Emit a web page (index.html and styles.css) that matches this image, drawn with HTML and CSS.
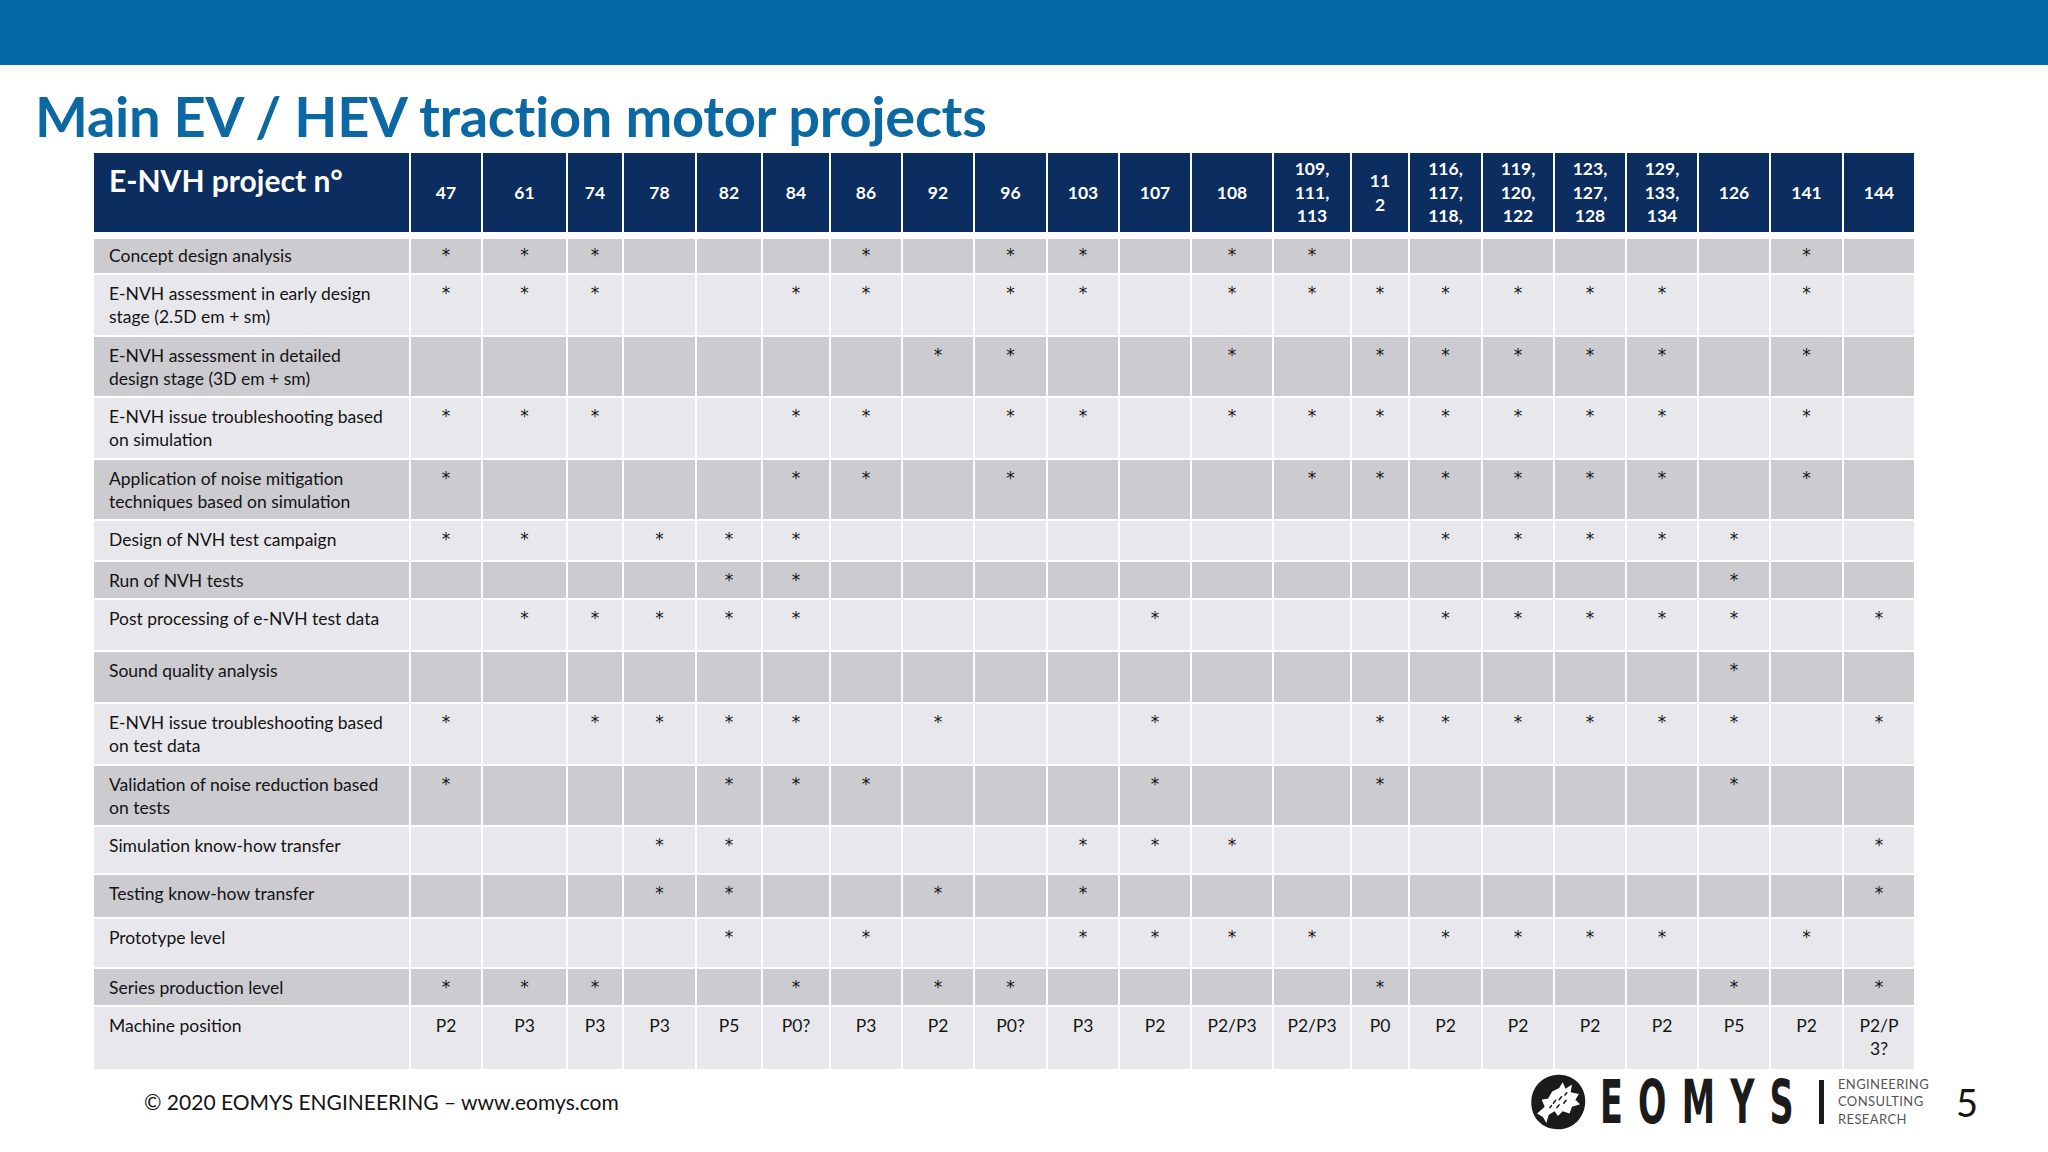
FILE: index.html
```html
<!DOCTYPE html>
<html lang="en">
<head>
<meta charset="utf-8">
<title>Main EV / HEV traction motor projects</title>
<link rel="stylesheet" href="styles.css">
</head>
<body>
<div class="topbar"></div>
<h1 class="title">Main EV / HEV traction motor projects</h1>
<div class="matrix">
  <div class="row head">
    <div class="lbl">E-NVH project n°</div>
    <div>47</div><div>61</div><div>74</div><div>78</div><div>82</div><div>84</div><div>86</div><div>92</div><div>96</div><div>103</div><div>107</div><div>108</div>
    <div>109,<br>111,<br>113</div><div>11<br>2</div><div>116,<br>117,<br>118,</div><div>119,<br>120,<br>122</div><div>123,<br>127,<br>128</div><div>129,<br>133,<br>134</div>
    <div>126</div><div>141</div><div>144</div>
  </div>
  <div class="body">
    <div class="row dark first"><div class="lbl">Concept design analysis</div><div>*</div><div>*</div><div>*</div><div></div><div></div><div></div><div>*</div><div></div><div>*</div><div>*</div><div></div><div>*</div><div>*</div><div></div><div></div><div></div><div></div><div></div><div></div><div>*</div><div></div></div>
    <div class="row light"><div class="lbl">E-NVH assessment in early design<br>stage (2.5D em + sm)</div><div>*</div><div>*</div><div>*</div><div></div><div></div><div>*</div><div>*</div><div></div><div>*</div><div>*</div><div></div><div>*</div><div>*</div><div>*</div><div>*</div><div>*</div><div>*</div><div>*</div><div></div><div>*</div><div></div></div>
    <div class="row dark"><div class="lbl">E-NVH assessment in detailed<br>design stage (3D em + sm)</div><div></div><div></div><div></div><div></div><div></div><div></div><div></div><div>*</div><div>*</div><div></div><div></div><div>*</div><div></div><div>*</div><div>*</div><div>*</div><div>*</div><div>*</div><div></div><div>*</div><div></div></div>
    <div class="row light"><div class="lbl">E-NVH issue troubleshooting based<br>on simulation</div><div>*</div><div>*</div><div>*</div><div></div><div></div><div>*</div><div>*</div><div></div><div>*</div><div>*</div><div></div><div>*</div><div>*</div><div>*</div><div>*</div><div>*</div><div>*</div><div>*</div><div></div><div>*</div><div></div></div>
    <div class="row dark"><div class="lbl">Application of noise mitigation<br>techniques based on simulation</div><div>*</div><div></div><div></div><div></div><div></div><div>*</div><div>*</div><div></div><div>*</div><div></div><div></div><div></div><div>*</div><div>*</div><div>*</div><div>*</div><div>*</div><div>*</div><div></div><div>*</div><div></div></div>
    <div class="row light"><div class="lbl">Design of NVH test campaign</div><div>*</div><div>*</div><div></div><div>*</div><div>*</div><div>*</div><div></div><div></div><div></div><div></div><div></div><div></div><div></div><div></div><div>*</div><div>*</div><div>*</div><div>*</div><div>*</div><div></div><div></div></div>
    <div class="row dark"><div class="lbl">Run of NVH tests</div><div></div><div></div><div></div><div></div><div>*</div><div>*</div><div></div><div></div><div></div><div></div><div></div><div></div><div></div><div></div><div></div><div></div><div></div><div></div><div>*</div><div></div><div></div></div>
    <div class="row light"><div class="lbl">Post processing of e-NVH test data</div><div></div><div>*</div><div>*</div><div>*</div><div>*</div><div>*</div><div></div><div></div><div></div><div></div><div>*</div><div></div><div></div><div></div><div>*</div><div>*</div><div>*</div><div>*</div><div>*</div><div></div><div>*</div></div>
    <div class="row dark"><div class="lbl">Sound quality analysis</div><div></div><div></div><div></div><div></div><div></div><div></div><div></div><div></div><div></div><div></div><div></div><div></div><div></div><div></div><div></div><div></div><div></div><div></div><div>*</div><div></div><div></div></div>
    <div class="row light"><div class="lbl">E-NVH issue troubleshooting based<br>on test data</div><div>*</div><div></div><div>*</div><div>*</div><div>*</div><div>*</div><div></div><div>*</div><div></div><div></div><div>*</div><div></div><div></div><div>*</div><div>*</div><div>*</div><div>*</div><div>*</div><div>*</div><div></div><div>*</div></div>
    <div class="row dark"><div class="lbl">Validation of noise reduction based<br>on tests</div><div>*</div><div></div><div></div><div></div><div>*</div><div>*</div><div>*</div><div></div><div></div><div></div><div>*</div><div></div><div></div><div>*</div><div></div><div></div><div></div><div></div><div>*</div><div></div><div></div></div>
    <div class="row light"><div class="lbl">Simulation know-how transfer</div><div></div><div></div><div></div><div>*</div><div>*</div><div></div><div></div><div></div><div></div><div>*</div><div>*</div><div>*</div><div></div><div></div><div></div><div></div><div></div><div></div><div></div><div></div><div>*</div></div>
    <div class="row dark"><div class="lbl">Testing know-how transfer</div><div></div><div></div><div></div><div>*</div><div>*</div><div></div><div></div><div>*</div><div></div><div>*</div><div></div><div></div><div></div><div></div><div></div><div></div><div></div><div></div><div></div><div></div><div>*</div></div>
    <div class="row light"><div class="lbl">Prototype level</div><div></div><div></div><div></div><div></div><div>*</div><div></div><div>*</div><div></div><div></div><div>*</div><div>*</div><div>*</div><div>*</div><div></div><div>*</div><div>*</div><div>*</div><div>*</div><div></div><div>*</div><div></div></div>
    <div class="row dark"><div class="lbl">Series production level</div><div>*</div><div>*</div><div>*</div><div></div><div></div><div>*</div><div></div><div>*</div><div>*</div><div></div><div></div><div></div><div></div><div>*</div><div></div><div></div><div></div><div></div><div>*</div><div></div><div>*</div></div>
    <div class="row light pos"><div class="lbl">Machine position</div><div>P2</div><div>P3</div><div>P3</div><div>P3</div><div>P5</div><div>P0?</div><div>P3</div><div>P2</div><div>P0?</div><div>P3</div><div>P2</div><div>P2/P3</div><div>P2/P3</div><div>P0</div><div>P2</div><div>P2</div><div>P2</div><div>P2</div><div>P5</div><div>P2</div><div>P2/P<br>3?</div></div>
  </div>
</div>
<footer class="footer">
  <div class="copy">© 2020 EOMYS ENGINEERING – www.eomys.com</div>
  <div class="brand">
    <svg class="emblem" viewBox="0 0 100 100" width="58" height="58" aria-hidden="true">
      <path d="M50 3 C76 2 98 22 97 50 C96 77 76 98 49 97 C22 96 3 76 4 49 C5 23 24 4 50 3 Z" fill="#1b1b1b"/>
      <path d="M14 70 L27 58 L22 46 L33 44 L40 32 L52 26 L58 16 L63 27 L74 20 L72 33 L86 36 L80 46 L88 54 L74 58 L70 70 L58 66 L50 74 L44 66 L34 72 L30 86 L24 76 Z" fill="#ffffff"/>
      <g stroke="#1b1b1b" stroke-width="2.6" stroke-linecap="round">
        <line x1="42" y1="52" x2="46" y2="47"/>
        <line x1="52" y1="46" x2="56" y2="41"/>
        <line x1="48" y1="60" x2="52" y2="55"/>
        <line x1="60" y1="52" x2="64" y2="47"/>
        <line x1="62" y1="38" x2="65" y2="34"/>
        <line x1="36" y1="60" x2="39" y2="56"/>
      </g>
    </svg>
    <div class="wordmark"><span>EOMYS</span></div>
    <div class="divider"></div>
    <div class="tagline">ENGINEERING<br>CONSULTING<br>RESEARCH</div>
    <div class="page">5</div>
  </div>
</footer>
</body>
</html>
```
FILE: styles.css
```css
html, body {
  margin: 0;
  padding: 0;
}
body {
  width: 2048px;
  height: 1152px;
  overflow: hidden;
  background: #ffffff;
  font-family: Lato, "Open Sans", "Liberation Sans", sans-serif;
  color: #141414;
}
.topbar {
  height: 65px;
  background: #0368a6;
}
.title {
  margin: 19px 0 0 35px;
  font-size: 56px;
  line-height: 64px;
  font-weight: 700;
  color: #0b68a3;
  letter-spacing: -0.3px;
}
.matrix {
  margin: 5px 0 0 94px;
  width: 1820px;
}
.row {
  display: grid;
  grid-template-columns: 315px 70px 83px 54px 71px 64px 66px 70px 70px 71px 70px 70px 80px 76px 56px 71px 70px 70px 70px 70px 71px 70px;
  column-gap: 2px;
}
.head {
  height: 79px;
  margin-bottom: 7px;
}
.head > div {
  background: #0c2d5f;
  color: #ffffff;
  font-weight: 700;
  font-size: 17.5px;
  line-height: 23.5px;
  display: flex;
  align-items: center;
  justify-content: center;
  text-align: center;
}
.head > .lbl {
  align-items: flex-start;
  justify-content: flex-start;
  text-align: left;
  font-size: 30px;
  line-height: 36px;
  padding: 9px 0 0 15px;
}
.body {
  display: grid;
  grid-template-rows: 34px 60px 59px 60px 59px 39px 36px 50px 50px 60px 59px 46px 42px 48px 36px 62px;
  row-gap: 2px;
}
.body .row > div {
  font-family: "DejaVu Sans", "Liberation Sans", sans-serif;
  font-size: 17px;
  line-height: 23.4px;
  padding-top: 7px;
  text-align: center;
  box-sizing: border-box;
}
.body .row > .lbl,
.body .row.pos > div {
  font-family: Lato, "Open Sans", "Liberation Sans", sans-serif;
  font-size: 17.5px;
}
.body .row > .lbl {
  text-align: left;
  padding-left: 15px;
}
.body .row.first > div {
  padding-top: 5px;
}
.dark > div {
  background: #cbcbd0;
}
.light > div {
  background: #e8e8ec;
}
.footer {
  display: flex;
  align-items: center;
  height: 62px;
  margin-top: 2px;
  padding: 0 70px 0 144px;
}
.copy {
  font-size: 21px;
  color: #141414;
  margin-top: -2px;
}
.brand {
  margin-left: auto;
  display: flex;
  align-items: center;
}
.emblem {
  display: block;
  margin-right: 13px;
}
.wordmark {
  width: 189px;
  height: 44px;
  overflow: visible;
  margin-right: 30px;
}
.wordmark span {
  display: inline-block;
  white-space: nowrap;
  font-family: "DejaVu Sans Condensed", "DejaVu Sans", sans-serif;
  font-weight: 700;
  font-size: 60px;
  line-height: 44px;
  letter-spacing: 24.5px;
  color: #1b1b1b;
  transform: scaleX(0.62);
  transform-origin: 0 50%;
}
.divider {
  width: 5px;
  height: 44px;
  background: #1b1b1b;
  margin-right: 14px;
}
.tagline {
  font-size: 13px;
  line-height: 17.5px;
  letter-spacing: 0.4px;
  color: #555555;
  width: 90px;
  margin-right: 28px;
}
.page {
  font-size: 38px;
  line-height: 44px;
  color: #141414;
}
```
